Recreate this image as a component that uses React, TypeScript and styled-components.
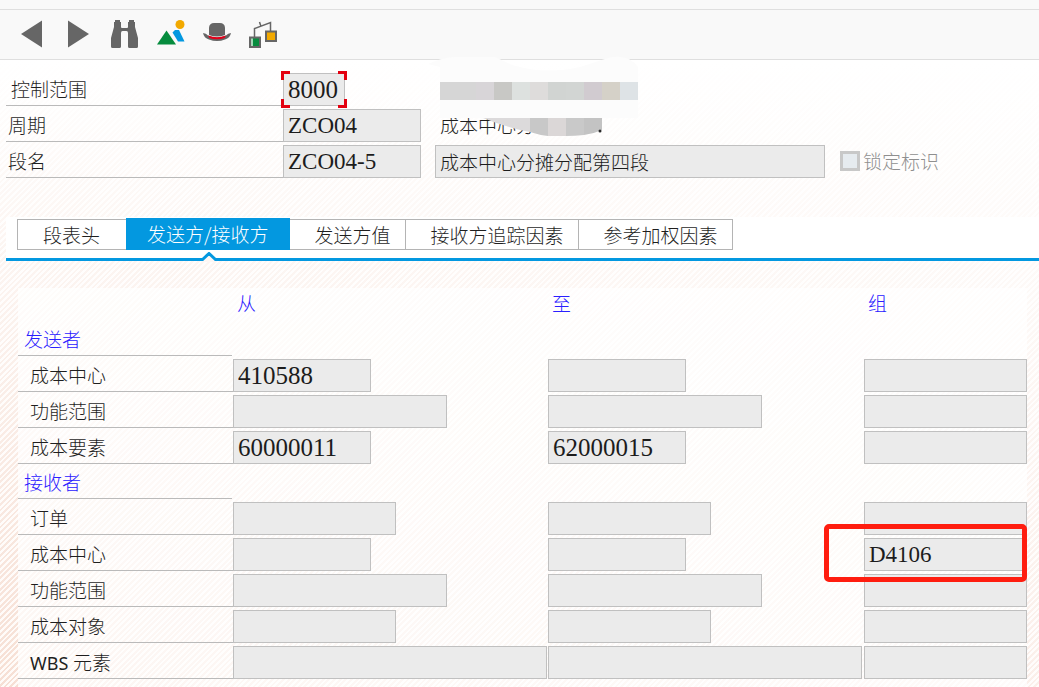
import React from 'react';
import styled, { createGlobalStyle } from 'styled-components';

const GlobalStyle = createGlobalStyle`
  * { box-sizing: border-box; }
  body {
    margin: 0;
    background: #fff;
    color: #1f1f1f;
    font: 300 19px/24px "Noto Sans CJK SC", "Noto Sans", sans-serif;
  }
`;

const Page = styled.main`
  min-height: 100vh;
  display: flex;
  flex-direction: column;
  background:
    linear-gradient(to bottom, #fff 60px, rgba(255, 255, 255, 0.78) 220px, rgba(255, 255, 255, 0.15) 100%),
    linear-gradient(to right, rgba(255, 255, 255, 0), rgba(255, 255, 255, 0.5)),
    repeating-linear-gradient(135deg, #f5dacd 0 2px, #fffaf7 2px 4px);
`;

const Toolbar = styled.nav`
  flex: none;
  height: 60px;
  padding: 8px 19px 0;
  display: flex;
  align-items: center;
  gap: 18px;
  background: linear-gradient(#f9f9f9 9px, #dfdfdf 9px 10px, #f9f9f9 10px);
  border-bottom: 1px solid #dfdfdf;
`;

const ToolButton = styled.button`
  width: 28px;
  height: 32px;
  padding: 0;
  border: 0;
  background: none;

  svg { display: block; overflow: visible; }
`;

const Header = styled.section`
  position: relative;
  padding: 10px 6px 39px;
`;

const HeaderRow = styled.div`
  display: flex;
  height: 36px;
  align-items: flex-end;
`;

const HeaderLabel = styled.label<{ $indent?: number }>`
  flex: none;
  width: 277px;
  height: 36px;
  padding: 7px 0 0 ${(p) => p.$indent ?? 2}px;
  border-bottom: 1px solid #bababa;
`;

const Field = styled.input<{ $w?: number; $kind?: 'code' | 'text' }>`
  display: block;
  flex: none;
  width: ${(p) => p.$w ?? 138}px;
  height: 33px;
  padding: 0 4px;
  border: 1px solid #c0c0c0;
  border-radius: 0;
  outline: 0;
  background: #ebebeb;
  color: #1c1c1c;
  font: ${(p) =>
    p.$kind === 'text'
      ? '300 19px/24px "Noto Sans CJK SC", sans-serif'
      : `${p.$kind === 'code' ? 23 : 25}px/28px "Liberation Serif", serif`};
`;

const FocusFrame = styled.div`
  position: relative;

  svg {
    position: absolute;
    left: -2px;
    top: -2px;
    pointer-events: none;
  }
`;

const Description = styled.div`
  margin-left: 14px;
`;

const PlainText = styled.span`
  display: block;
  height: 29px;
  padding-left: 5px;
`;

const Redaction = styled.svg`
  position: absolute;
  left: 420px;
  top: -5px;
  pointer-events: none;
`;

const LockLabel = styled.label`
  display: flex;
  align-items: center;
  gap: 3px;
  height: 34px;
  margin-left: 15px;
  color: #8f8f8f;

  input {
    appearance: none;
    width: 20px;
    height: 20px;
    margin: 0;
    border: 3px solid #c8c8c8;
    background: #e6ebef;
  }
`;

const TabStrip = styled.div`
  margin-left: 6px;
  height: 44px;
  padding: 1px 0 0 11px;
  background: #fff;
  border-bottom: 3px solid #0398e0;
`;

const Tabs = styled.div`
  display: flex;
  align-items: flex-end;
`;

const Tab = styled.button<{ $active?: boolean; $first?: boolean }>`
  position: relative;
  flex: none;
  height: ${(p) => (p.$active ? 32 : 31)}px;
  padding: ${(p) => (p.$active ? '0 21px' : '0 14px 0 25px')};
  border: solid #b4b4b4;
  border-width: ${(p) => (p.$active ? '0' : p.$first ? '1px 0 1px 1px' : '1px 1px 1px 0')};
  background: ${(p) => (p.$active ? '#0398e0' : '#fff')};
  color: ${(p) => (p.$active ? '#fff' : '#1f1f1f')};
  font: inherit;
  white-space: nowrap;
  ${(p) => p.$first && 'padding-right: 26px;'}

  svg {
    position: absolute;
    left: calc(50% - 7px);
    top: 34px;
  }
`;

const Panel = styled.section`
  flex: 1;
  margin: 27px 12px 0 18px;
  padding-bottom: 7px;
  background: rgba(255, 255, 255, 0.7);
`;

const GridRow = styled.div<{ $kind?: 'head' | 'title' }>`
  display: grid;
  grid-template-columns: 215px 315fr 316fr 163px;
  height: ${(p) => (p.$kind === 'head' ? 33 : p.$kind === 'title' ? 35 : 36)}px;
  align-items: end;
`;

const ColumnTitle = styled.span`
  height: 30px;
  padding-left: 4px;
  color: #2a20ff;
`;

const GroupTitle = styled.h2`
  height: 35px;
  margin: 0 1px 0 0;
  padding: 6px 0 0 6px;
  border-bottom: 1px solid #bababa;
  color: #2a20ff;
  font: inherit;
`;

const RowLabel = styled.label`
  height: 36px;
  padding: 7px 0 0 12px;
  border-bottom: 1px solid #bababa;
`;

const Latin = styled.span`
  font: 400 18px/24px "Noto Sans", sans-serif;
`;

const Cell = styled.div`
  position: relative;
`;

const Highlight = styled.span`
  position: absolute;
  z-index: 1;
  left: -40px;
  right: 0;
  top: -14px;
  height: 58px;
  border: 5px solid #ff1d0f;
  border-radius: 5px;
  pointer-events: none;
`;

interface RowData {
  id: string;
  prefix?: string;
  label: string;
  width: number;
  from?: string;
  to?: string;
  group?: string;
  marked?: boolean;
}

const senders: RowData[] = [
  { id: 's-center', label: '成本中心', width: 138, from: '410588' },
  { id: 's-area', label: '功能范围', width: 214 },
  { id: 's-element', label: '成本要素', width: 138, from: '60000011', to: '62000015' },
];

const receivers: RowData[] = [
  { id: 'r-order', label: '订单', width: 163 },
  { id: 'r-center', label: '成本中心', width: 138, group: 'D4106', marked: true },
  { id: 'r-area', label: '功能范围', width: 214 },
  { id: 'r-object', label: '成本对象', width: 163 },
  { id: 'r-wbs', prefix: 'WBS ', label: '元素', width: 314 },
];

const Rows = ({ title, rows }: { title: string; rows: RowData[] }) => (
  <>
    <GridRow $kind="title">
      <GroupTitle>{title}</GroupTitle>
    </GridRow>
    {rows.map((r) => (
      <GridRow key={r.id}>
        <RowLabel htmlFor={r.id}>
          {r.prefix && <Latin>{r.prefix}</Latin>}
          {r.label}
        </RowLabel>
        <Field id={r.id} $w={r.width} defaultValue={r.from} readOnly />
        <Field aria-label={`${r.label} 至`} $w={r.width} defaultValue={r.to} readOnly />
        <Cell>
          <Field aria-label={`${r.label} 组`} $w={163} $kind="code" defaultValue={r.group} readOnly />
          {r.marked && <Highlight />}
        </Cell>
      </GridRow>
    ))}
  </>
);

const mosaic = ['#d6d6d6', '#d6d6d6', '#d8d5d8', '#c8c8c5', '#dde1df', '#dedcdb', '#d1d4d2', '#d2d5d3', '#d1cbd0', '#d5d1c8', '#dee3e6'];

export default function App() {
  return (
    <>
      <GlobalStyle />
      <Page>
        <Toolbar>
          <ToolButton aria-label="上一个">
            <svg width="28" height="32" fill="#666"><path d="M2 16 23 2.500V29.500Z" /></svg>
          </ToolButton>
          <ToolButton aria-label="下一个">
            <svg width="28" height="32" fill="#666"><path d="M24 16 3 2.500V29.500Z" /></svg>
          </ToolButton>
          <ToolButton aria-label="查找">
            <svg width="28" height="32" fill="#666">
              <path d="M4 2h5v2h1v5q0 1 1 1h5q1 0 1-1V4h1V2h5v2h1v5l3 11v8.500q0 1.500-1.500 1.500h-7Q17 30 17 28.500V15q0-2-1.500-2h-4Q10 13 10 15v13.500q0 1.500-1.500 1.500h-7Q0 30 0 28.500V20L3 9V4h1Z" />
            </svg>
          </ToolButton>
          <ToolButton aria-label="概览">
            <svg width="28" height="32">
              <path d="M0 26.500 9.500 12.500 19 26.500Z" fill="#068c3e" />
              <path d="M15.500 14.500 18 12h4l5.500 11.500h-6.500Z" fill="#0398e0" />
              <circle cx="23" cy="6.500" r="4.500" fill="#f2a900" />
            </svg>
          </ToolButton>
          <ToolButton aria-label="抬头">
            <svg width="28" height="32">
              <path d="M0 15q3 0 5 2.500 9 4 18 0 2-2.500 5-2.500-1 5-6 6.500-8 3-16 0-5-1.500-6-6.500Z" fill="#666" />
              <path d="M5 17.500q9 3.500 18 0l-1.500 2.500q-7.500 2.500-15 0Z" fill="#e2001a" />
              <path d="M6 17V9.500Q6.500 5 11 5h6q4.500 0 5 4.500V17q-8 3-16 0Z" fill="#666" />
            </svg>
          </ToolButton>
          <ToolButton aria-label="分配">
            <svg width="28" height="32" fill="none" stroke="#666" strokeWidth="1.500">
              <path d="M5.500 19v-8.500L21.500 4.500V13M10.500 4l1.500 4.500" />
              <rect x="1" y="19.500" width="10" height="9.500" fill="#068c3e" strokeWidth="2" />
              <path d="M3 20.500v7.500" stroke="#d8f0df" />
              <rect x="17" y="13.500" width="10" height="9.500" fill="#f2a900" strokeWidth="2" />
            </svg>
          </ToolButton>
        </Toolbar>

        <Header>
          <HeaderRow>
            <HeaderLabel htmlFor="area" $indent={5}>控制范围</HeaderLabel>
            <FocusFrame>
              <Field id="area" $w={62} defaultValue="8000" readOnly />
              <svg width="66" height="37" fill="none" stroke="#e3000f" strokeWidth="3">
                <path d="M1.500 9V1.500H9M57 1.500h7.500V9M64.500 28v7.500H57M9 35.500H1.500V28" />
              </svg>
            </FocusFrame>
          </HeaderRow>
          <HeaderRow>
            <HeaderLabel htmlFor="cycle">周期</HeaderLabel>
            <Field id="cycle" $kind="code" defaultValue="ZCO04" readOnly />
            <Description>
              <PlainText>成本中心分</PlainText>
            </Description>
          </HeaderRow>
          <HeaderRow>
            <HeaderLabel htmlFor="segment">段名</HeaderLabel>
            <Field id="segment" $kind="code" defaultValue="ZCO04-5" readOnly />
            <Description>
              <Field aria-label="段描述" $w={390} $kind="text" defaultValue="成本中心分摊分配第四段" readOnly />
            </Description>
            <LockLabel>
              <input type="checkbox" disabled />
              锁定标识
            </LockLabel>
          </HeaderRow>
          <Redaction width="230" height="90">
            <path d="M8 9Q20 3 35 2H75L92 10Q125 20 160 12L188 3Q208-2 218 12V63H20V12Z" fill="#fcfcfc" />
            {mosaic.map((c, i) => (
              <rect key={i} x={20 + i * 18} y="27" width="18" height="18" fill={c} />
            ))}
            <path d="M63 63H110V77Q85 72 63 63Z" fill="#dcdadb" />
            <path d="M110 63h18v18q-9-1-18-4Z" fill="#c8c8c8" />
            <path d="M128 63h18v18h-18Z" fill="#dbd7d7" />
            <path d="M146 63h18v17q-9 1-18 1Z" fill="#c9c9c9" />
            <path d="M164 63h18v12q-9 4-18 5Z" fill="#c3c3c3" />
            <circle cx="180" cy="76" r="1.500" fill="#2b2b2b" />
          </Redaction>
        </Header>

        <TabStrip>
          <Tabs role="tablist">
            <Tab role="tab" $first>段表头</Tab>
            <Tab role="tab" $active aria-selected>
              发送方/接收方
              <svg width="16" height="10">
                <path d="M0 10 8 1 16 10Z" fill="#fdf7f4" />
                <path d="M0 7.500H1.500L8 1.500 14.500 7.500H16" fill="none" stroke="#0398e0" strokeWidth="3" />
              </svg>
            </Tab>
            <Tab role="tab">发送方值</Tab>
            <Tab role="tab">接收方追踪因素</Tab>
            <Tab role="tab">参考加权因素</Tab>
          </Tabs>
        </TabStrip>

        <Panel>
          <GridRow $kind="head">
            <span />
            <ColumnTitle>从</ColumnTitle>
            <ColumnTitle>至</ColumnTitle>
            <ColumnTitle>组</ColumnTitle>
          </GridRow>
          <Rows title="发送者" rows={senders} />
          <Rows title="接收者" rows={receivers} />
        </Panel>
      </Page>
    </>
  );
}
